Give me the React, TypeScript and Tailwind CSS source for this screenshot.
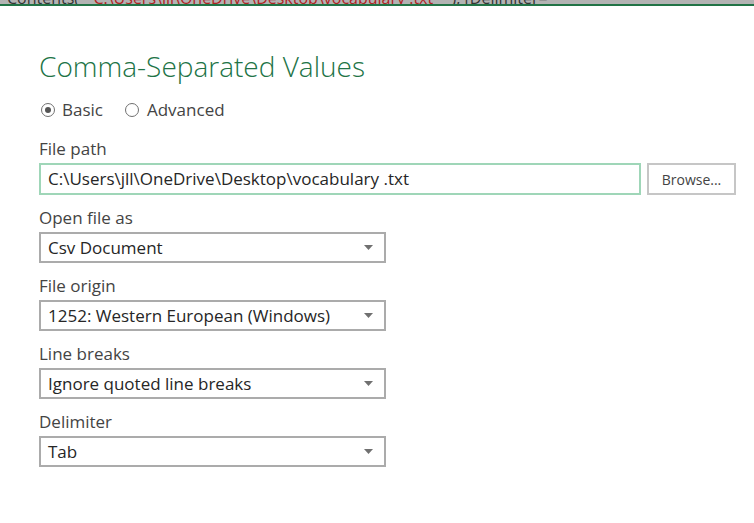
import React from "react";

const font = { fontFamily: '"Open Sans", "Noto Sans", sans-serif' };

function Caret() {
  return (
    <svg width="9" height="5" viewBox="0 0 9 5" className="shrink-0">
      <path d="M0 0 H9 L4.5 5 Z" fill="#707070" />
    </svg>
  );
}

function Select({ value }: { value: string }) {
  return (
    <div className="flex h-[31px] w-[347px] items-center justify-between border-2 border-[#ababab] bg-white pl-[7px] pr-[11px]">
      <span className="text-[17px] leading-none text-[#262626]">{value}</span>
      <Caret />
    </div>
  );
}

function Field({ label, value }: { label: string; value: string }) {
  return (
    <div className="mt-[12px] flex flex-col">
      <div className="mb-[3px] text-[17px] leading-[22px] text-[#444444]">{label}</div>
      <Select value={value} />
    </div>
  );
}

export default function App() {
  return (
    <div className="relative h-[523px] w-[754px] overflow-hidden bg-white" style={font}>
      {/* top cut-off formula bar */}
      <div className="h-[4px] overflow-hidden bg-[#b3b3b3]">
        <div className="-mt-[10px] flex whitespace-nowrap pl-[7px] text-[16px] leading-[16px]">
          <span className="text-[#333]">Contents(</span>
          <span className="pl-[8px] text-[#b22222]">"C:\Users\jll\OneDrive\Desktop\vocabulary .txt"</span>
          <span className="pl-[12px] text-[#333]">), [Delimiter="</span>
        </div>
      </div>
      <div className="h-[2px] bg-[#217346]" />

      <div className="flex flex-col pl-[39px]">
        <h1 className="mt-[42px] text-[28px] font-light leading-[36px] text-[#217346]">
          Comma-Separated Values
        </h1>
        <div className="mt-[15px] flex items-center text-[17px] leading-[22px] text-[#444444]">
          <label className="ml-[2px] flex items-center gap-[7px]">
            <span className="flex h-[14px] w-[14px] items-center justify-center rounded-full border border-[#707070]">
              <span className="h-[6px] w-[6px] rounded-full bg-[#555]" />
            </span>
            Basic
          </label>
          <label className="ml-[22px] flex items-center gap-[8px]">
            <span className="h-[14px] w-[14px] rounded-full border border-[#707070]" />
            Advanced
          </label>
        </div>

        <div className="mb-[3px] mt-[17px] text-[17px] leading-[22px] text-[#444444]">File path</div>
        <div className="flex items-center gap-[6px]">
          <div className="flex h-[32px] w-[602px] items-center border-2 border-[#9fd6b8] pl-[7px] text-[17px] text-[#262626]">
            C:\Users\jll\OneDrive\Desktop\vocabulary .txt
          </div>
          <button className="flex h-[32px] w-[89px] items-center justify-center border-2 border-[#c6c6c6] bg-white text-[14px] text-[#444]">
            Browse...
          </button>
        </div>

        <Field label="Open file as" value="Csv Document" />
        <Field label="File origin" value="1252: Western European (Windows)" />
        <Field label="Line breaks" value="Ignore quoted line breaks" />
        <Field label="Delimiter" value="Tab" />
      </div>
    </div>
  );
}
